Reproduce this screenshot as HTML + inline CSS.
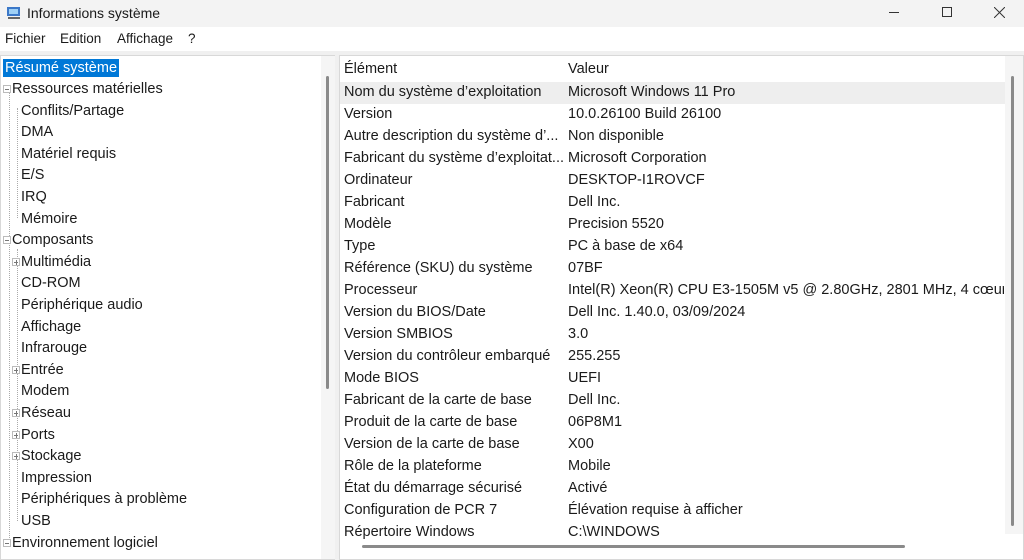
<!DOCTYPE html>
<html><head><meta charset="utf-8"><style>
*{margin:0;padding:0;box-sizing:border-box}
body{width:1024px;height:560px;overflow:hidden;background:#f0f0f0;font-family:"Liberation Sans",sans-serif;font-size:14.5px;color:#1a1a1a;position:relative}
.title{position:absolute;left:0;top:0;width:1024px;height:27px;background:#f3f3f3}
.title .t{position:absolute;left:27px;top:5px;font-size:14px}
.menu{position:absolute;left:0;top:27px;width:1024px;height:24px;background:#fff}
.menu span{position:absolute;top:4px;font-size:13.5px}
.lp{position:absolute;left:0;top:55px;width:335px;height:505px;background:#fff;border:1px solid #d8d8d8}
.rp{position:absolute;left:339px;top:55px;width:685px;height:505px;background:#fff;border:1px solid #d8d8d8}
.li{position:absolute;white-space:nowrap;line-height:18px}
.ri{position:absolute;white-space:nowrap;line-height:18px}
.vl{position:absolute;border-left:1px dotted #aaa}
</style></head><body>
<div class="title">
<svg style="position:absolute;left:6px;top:5px" width="16" height="16"><rect x="1" y="2" width="13" height="9" fill="#3c78c8"/><rect x="3" y="4" width="9" height="5" fill="#9fd0f5"/><rect x="2" y="12" width="12" height="2" fill="#666"/></svg>
<span class="t">Informations système</span>
<div style="position:absolute;left:889px;top:12px;width:10px;height:1px;background:#333"></div>
<div style="position:absolute;left:942px;top:7px;width:10px;height:10px;border:1px solid #333"></div>
<svg style="position:absolute;left:994px;top:7px" width="11" height="11"><path d="M0 0L11 11M11 0L0 11" stroke="#333" stroke-width="1"/></svg>
</div>
<div class="menu"><span style="left:5px">Fichier</span><span style="left:60px">Edition</span><span style="left:117px">Affichage</span><span style="left:188px">?</span></div>
<div class="lp">
<div style="position:absolute;left:320px;top:0;width:14px;height:503px;background:#f5f5f5"></div>
<div style="position:absolute;left:325px;top:20px;width:3px;height:313px;background:#8a8a8a;border-radius:2px"></div>
<div class="vl" style="left:8px;top:30px;height:460px"></div>
<div class="vl" style="left:16px;top:52px;height:110px"></div>
<div class="vl" style="left:16px;top:193px;height:272px"></div>
</div>
<div class="li" style="left:3px;top:59px;background:#0078d7;color:#fff;padding:0 2px;font-size:14.5px">Résumé système</div>
<div id="tree"></div>
<div class="rp">
<div style="position:absolute;left:0;top:26px;width:665px;height:22px;background:#eeeeee"></div>
<div style="position:absolute;left:665px;top:0;width:18px;height:478px;background:#f5f5f5"></div>
<div style="position:absolute;left:671px;top:20px;width:3px;height:450px;background:#8a8a8a;border-radius:2px"></div>
<div style="position:absolute;left:22px;top:489px;width:543px;height:3px;background:#8a8a8a;border-radius:2px"></div>
</div>
<div id="rows"></div>
<script>
var L=[["Ressources matérielles",12,"m"],["Conflits/Partage",21],["DMA",21],["Matériel requis",21],["E/S",21],["IRQ",21],["Mémoire",21],["Composants",12,"m"],["Multimédia",21,"p"],["CD-ROM",21],["Périphérique audio",21],["Affichage",21],["Infrarouge",21],["Entrée",21,"p"],["Modem",21],["Réseau",21,"p"],["Ports",21,"p"],["Stockage",21,"p"],["Impression",21],["Périphériques à problème",21],["USB",21],["Environnement logiciel",12,"m"]];
var h="";L.forEach(function(e,i){var y=80+i*21.6;h+='<div class="li" style="left:'+e[1]+'px;top:'+y+'px">'+e[0]+'</div>';if(e[2]){var x=e[1]-9;h+='<div style="position:absolute;left:'+x+'px;top:'+(y+5)+'px;width:8px;height:8px;border:1px solid #bbb;background:#fff"><div style="position:absolute;left:1px;top:3px;width:4px;height:1px;background:#777"></div>'+(e[2]=="p"?'<div style="position:absolute;left:2.5px;top:1px;width:1px;height:5px;background:#777"></div>':'')+'</div>';}});
document.getElementById("tree").innerHTML=h;
var R=[["Élément","Valeur"],["Nom du système d’exploitation","Microsoft Windows 11 Pro"],["Version","10.0.26100 Build 26100"],["Autre description du système d’...","Non disponible"],["Fabricant du système d’exploitat...","Microsoft Corporation"],["Ordinateur","DESKTOP-I1ROVCF"],["Fabricant","Dell Inc."],["Modèle","Precision 5520"],["Type","PC à base de x64"],["Référence (SKU) du système","07BF"],["Processeur","Intel(R) Xeon(R) CPU E3-1505M v5 @ 2.80GHz, 2801 MHz, 4 cœur(s)"],["Version du BIOS/Date","Dell Inc. 1.40.0, 03/09/2024"],["Version SMBIOS","3.0"],["Version du contrôleur embarqué","255.255"],["Mode BIOS","UEFI"],["Fabricant de la carte de base","Dell Inc."],["Produit de la carte de base","06P8M1"],["Version de la carte de base","X00"],["Rôle de la plateforme","Mobile"],["État du démarrage sécurisé","Activé"],["Configuration de PCR 7","Élévation requise à afficher"],["Répertoire Windows","C:\\WINDOWS"]];
h="";R.forEach(function(r,i){var y=60+i*22+(i?1:0);h+='<div class="ri" style="left:344px;top:'+y+'px">'+r[0]+'</div><div class="ri" style="left:568px;top:'+y+'px;width:436px;overflow:hidden">'+r[1]+'</div>';});
h='<div style="position:absolute;left:340px;top:56px;width:664px;height:486px;overflow:hidden"><div style="position:relative;left:-340px;top:-56px">'+h+'</div></div>';
document.getElementById("rows").innerHTML=h;
</script>
</body></html>
